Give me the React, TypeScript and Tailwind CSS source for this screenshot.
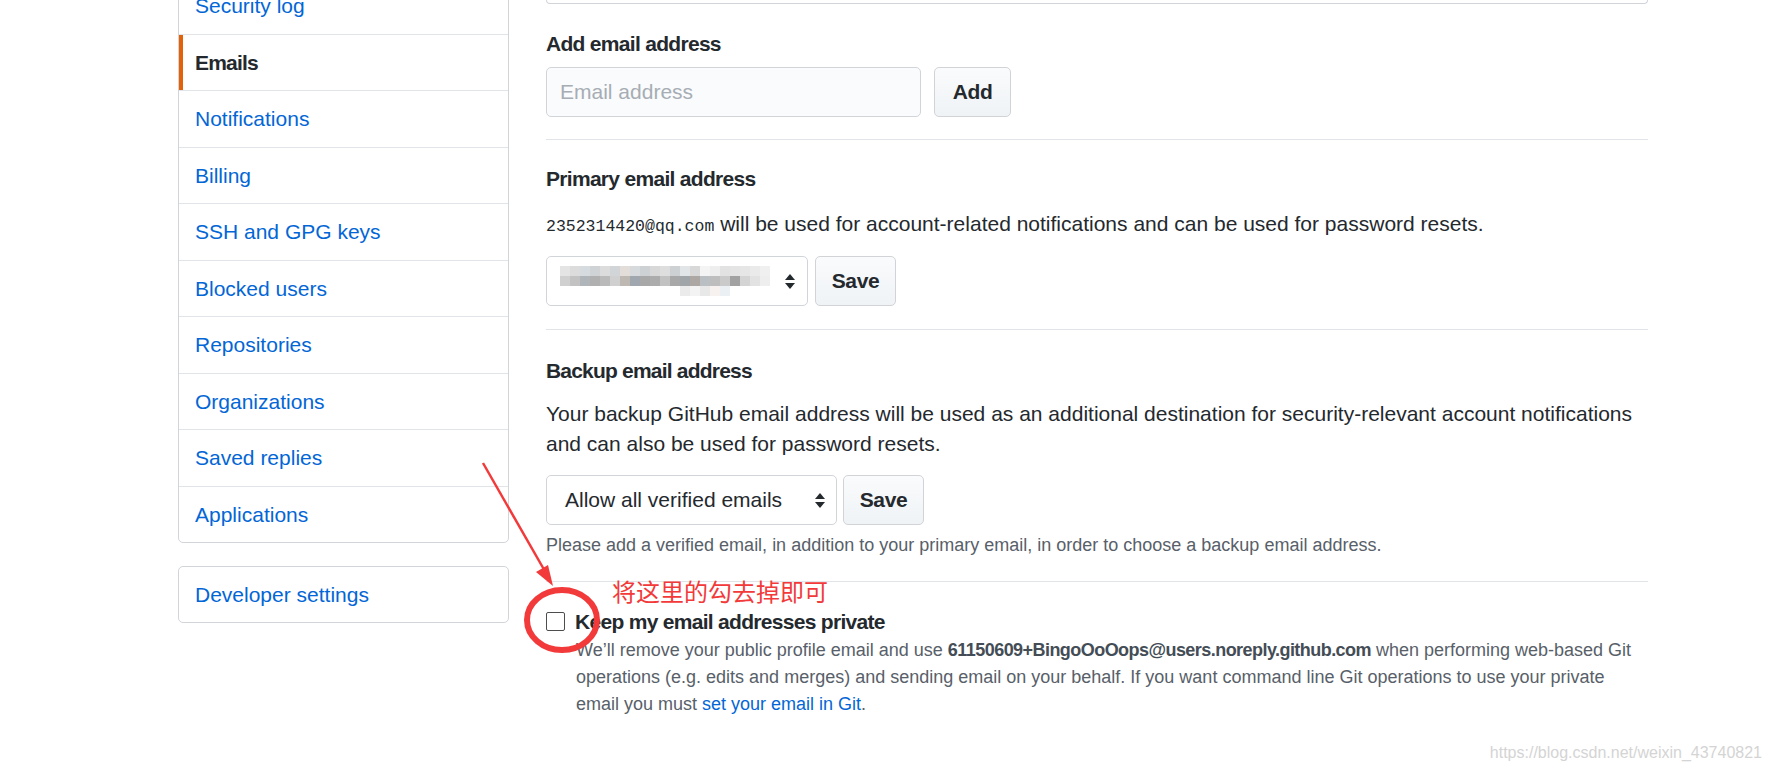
import React from 'react';

const menuItems = [
  'Security log',
  'Emails',
  'Notifications',
  'Billing',
  'SSH and GPG keys',
  'Blocked users',
  'Repositories',
  'Organizations',
  'Saved replies',
  'Applications',
];

// pixelated (blurred) email in the primary select
const mosaic: { x: number; colors: string[] }[] = [
  {
    x: 0,
    colors: ['#e4e4e4', '#dcdcdc', '#d6dbe0', '#d0d3d6', '#dcdcdc', '#d2d5d8', '#e2ddd8', '#d6dadd', '#ced1d4', '#d8d8d8', '#dedede', '#ced1d4', '#e2e5e8', '#d8d8d8', '#f4f4f4', '#eeeeee', '#e2e2e2', '#e4e4e4', '#e6e6e6', '#eaeaea', '#f0f0f0'],
  },
  {
    x: 0,
    colors: ['#d0d0d0', '#c2c2c2', '#b0b5ba', '#b0b0b0', '#bababa', '#d0d0d0', '#beb8b2', '#a0a7ae', '#a8a8a8', '#acacac', '#c2c2c2', '#a8a8a8', '#a0a5aa', '#aca7a2', '#babfc4', '#bebebe', '#cacaca', '#a2a2a2', '#d4d4d4', '#e2e2e2', '#eeeeee'],
  },
  {
    x: 12,
    colors: ['#ebebeb', '#f3f3f3', '#e8e8e8', '#f7f2ef', '#ebf0f5'],
  },
];

const SelectArrows = () => (
  <svg width="10" height="15" viewBox="0 0 10 15" className="shrink-0">
    <path d="M5 0L10 6H0z" fill="#24292e" />
    <path d="M5 15L0 9H10z" fill="#24292e" />
  </svg>
);

const Button = ({ label, className }: { label: string; className: string }) => (
  <button
    className={`${className} h-[50px] rounded-[5px] border border-[#d1d3d6] bg-gradient-to-b from-[#fafbfc] to-[#eff3f6] text-[21px] font-semibold tracking-[-0.4px] text-[#24292e]`}
  >
    {label}
  </button>
);

export default function App() {
  return (
    <div className="relative h-[773px] overflow-hidden bg-white font-['Liberation_Sans','Noto_Sans_CJK_SC',sans-serif] text-[#24292e]">
      <div className="flex gap-[37px] pl-[178px]">
        {/* settings menu */}
        <aside className="-mt-[24px] w-[331px] shrink-0">
          <nav className="rounded-b-[5px] border border-[#d1d5da] bg-white">
            {menuItems.map((item, i) => {
              const selected = item === 'Emails';
              return (
                <div
                  key={item}
                  className={`flex h-[56.5px] items-center pl-[16px] text-[21px] ${i > 0 ? 'border-t border-[#e1e4e8]' : ''} ${
                    selected
                      ? 'font-semibold tracking-[-0.8px] text-[#24292e] shadow-[inset_4px_0_0_#e36209]'
                      : 'text-[#0366d6]'
                  }`}
                >
                  {item}
                </div>
              );
            })}
          </nav>
          <div className="mt-[23px] flex h-[57px] items-center rounded-[5px] border border-[#d1d5da] pl-[16px] text-[21px] text-[#0366d6]">
            Developer settings
          </div>
        </aside>

        <main className="w-[1102px] shrink-0">
          <div className="h-[4px] rounded-b-[5px] border border-t-0 border-[#d1d5da]" />

          <section className="border-b border-[#e1e4e8] pt-[24px] pb-[22px]">
            <h3 className="text-[21px] leading-[31px] font-semibold tracking-[-0.7px]">Add email address</h3>
            <div className="mt-[8px] flex gap-[13px]">
              <input
                placeholder="Email address"
                className="h-[50px] w-[375px] rounded-[5px] border border-[#d1d5da] bg-[#fafbfc] px-[13px] text-[21px] placeholder:text-[#a6adb4]"
              />
              <Button label="Add" className="w-[77px]" />
            </div>
          </section>

          <section className="border-b border-[#e1e4e8] pt-[23px] pb-[23px]">
            <h3 className="text-[21px] leading-[31px] font-semibold tracking-[-0.7px]">Primary email address</h3>
            <p className="mt-[14px] text-[21px] leading-[31px]">
              <code className="font-['Liberation_Mono',monospace] text-[16.5px]">2352314420@qq.com</code> will be used
              for account-related notifications and can be used for password resets.
            </p>
            <div className="mt-[14px] flex gap-[7px]">
              <div className="flex h-[50px] w-[262px] items-center justify-between rounded-[5px] border border-[#d1d5da] bg-white pr-[12px] pl-[13px]">
                <svg width="210" height="30" viewBox="0 0 210 30">
                  {mosaic.map((row, r) =>
                    row.colors.map((c, j) => (
                      <rect key={`${r}-${j}`} x={(row.x + j) * 10} y={r * 10} width="10" height="10" fill={c} />
                    ))
                  )}
                </svg>
                <SelectArrows />
              </div>
              <Button label="Save" className="w-[81px]" />
            </div>
          </section>

          <section className="border-b border-[#e1e4e8] pt-[25px] pb-[22px]">
            <h3 className="text-[21px] leading-[31px] font-semibold tracking-[-0.8px]">Backup email address</h3>
            <p className="mt-[13px] text-[21px] leading-[30px]">
              Your backup GitHub email address will be used as an additional destination for security-relevant account
              notifications
              <br />
              and can also be used for password resets.
            </p>
            <div className="mt-[16px] flex gap-[6px]">
              <div className="flex h-[50px] w-[291px] items-center justify-between rounded-[5px] border border-[#d1d5da] bg-white pr-[11px] pl-[18px] text-[21px]">
                <span>Allow all verified emails</span>
                <SelectArrows />
              </div>
              <Button label="Save" className="w-[81px]" />
            </div>
            <p className="mt-[7px] text-[18px] leading-[27px] text-[#586069]">
              Please add a verified email, in addition to your primary email, in order to choose a backup email address.
            </p>
          </section>

          <section className="pt-[24px]">
            <label className="flex items-center gap-[10px]">
              <input
                type="checkbox"
                className="h-[19px] w-[19px] shrink-0 appearance-none rounded-[2px] border border-[#4d4d4d] bg-white"
              />
              <span className="text-[21px] leading-[31px] font-semibold tracking-[-0.7px]">
                Keep my email addresses private
              </span>
            </label>
            <p className="pl-[30px] text-[18px] leading-[27px] whitespace-nowrap text-[#586069]">
              We’ll remove your public profile email and use{' '}
              <strong className="tracking-[-0.55px] text-[#444d56]">61150609+BingoOoOops@users.noreply.github.com</strong>{' '}
              when performing web-based Git
              <br />
              operations (e.g. edits and merges) and sending email on your behalf. If you want command line Git
              operations to use your private
              <br />
              email you must <a className="text-[#0366d6]">set your email in Git</a>.
            </p>
          </section>
        </main>
      </div>

      {/* screenshot annotations */}
      <svg className="pointer-events-none absolute inset-0" width="1771" height="773">
        <line x1="483" y1="463" x2="546" y2="573" stroke="#f23a3a" strokeWidth="2.5" />
        <path d="M553 586L536 572L548 565z" fill="#f23a3a" />
        <ellipse cx="562" cy="620" rx="35" ry="30" fill="none" stroke="#f23a3a" strokeWidth="6" />
      </svg>
      <div className="absolute top-[576px] left-[612px] font-['Noto_Sans_CJK_SC',sans-serif] text-[24px] leading-[30px] text-[#f23a3a]">
        将这里的勾去掉即可
      </div>
      <div className="absolute top-[741px] right-[9px] font-['Liberation_Sans',sans-serif] text-[16px] text-[#d4d4d4]">
        https://blog.csdn.net/weixin_43740821
      </div>
    </div>
  );
}
